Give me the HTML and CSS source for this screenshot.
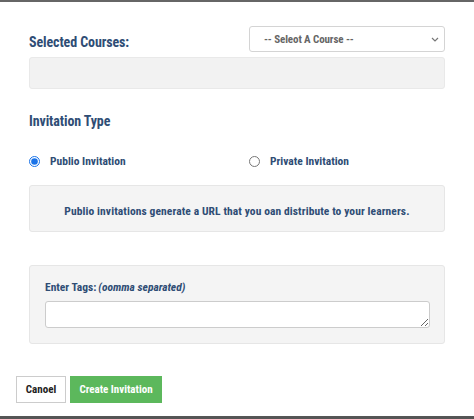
FILE: index.html
```html
<!DOCTYPE html>
<html lang="en">
<head>
    <meta charset="UTF-8">
    <meta name="viewport" content="width=device-width, initial-scale=1.0">
    <title>Create Invitation</title>
    <link rel="stylesheet" href="styles.css">
</head>
<body>
    <div class="page">
        <div class="invite-form">
            <div class="course-row">
                <label class="section-title" for="courseSelect">Selected Courses:</label>
                <div class="select-wrap">
                    <select id="courseSelect" class="course-select">
                        <option>-- Seleot A Course --</option>
                    </select>
                    <svg class="select-arrow" width="8" height="5" viewBox="0 0 8 5">
                        <path d="M1 1 L4 4 L7 1" fill="none" stroke="#777" stroke-width="1.2"/>
                    </svg>
                </div>
            </div>
            <div class="course-list"></div>

            <h2 class="section-title invite-title">Invitation Type</h2>

            <div class="radio-row">
                <label class="radio-option">
                    <input type="radio" name="inviteType" checked>
                    <span>Publio Invitation</span>
                </label>
                <label class="radio-option">
                    <input type="radio" name="inviteType">
                    <span>Private Invitation</span>
                </label>
            </div>

            <div class="info-box">Publio invitations generate a URL that you oan distribute to your learners.</div>

            <div class="tags-box">
                <label for="tags">Enter Tags:<em>(oomma separated)</em></label>
                <textarea id="tags"></textarea>
            </div>
        </div>

        <div class="actions">
            <button class="btn btn-cancel">Canoel</button>
            <button class="btn btn-create">Create Invitation</button>
        </div>
    </div>
</body>
</html>
```

FILE: styles.css
```css
* {
    box-sizing: border-box;
}

body {
    margin: 0;
    background: #fff;
    font-family: 'Roboto Condensed', 'Roboto', 'Liberation Sans', sans-serif;
    color: #2f4d75;
}

.page {
    height: 100vh;
    border-top: 2px solid #666;
    border-bottom: 3px solid #555;
    display: flex;
    flex-direction: column;
}

.invite-form {
    padding: 24px 29px 0 29px;
}

.section-title {
    font-size: 14px;
    letter-spacing: -0.1px;
    font-weight: bold;
    color: #2f4d75;
    margin: 0;
}

.course-row {
    display: flex;
    align-items: center;
    justify-content: space-between;
    height: 26px;
}

.course-row .section-title {
    padding-top: 5px;
}

.select-wrap {
    position: relative;
    width: 196px;
    height: 26px;
}

.course-select {
    appearance: none;
    width: 100%;
    height: 26px;
    border: 1px solid #d4d4d4;
    border-radius: 3px;
    background: #fff;
    color: #666;
    font-family: inherit;
    font-size: 11px;
    letter-spacing: -0.1px;
    font-weight: bold;
    padding: 0 10px 0 14px;
}

.select-arrow {
    position: absolute;
    right: 6px;
    top: 11px;
    pointer-events: none;
}

.course-list {
    margin-top: 5px;
    height: 32px;
    background: #f2f2f2;
    border: 1px solid #e9e9e9;
    border-radius: 3px;
}

.invite-title {
    margin-top: 24px;
}

.radio-row {
    display: flex;
    margin-top: 25px;
}

.radio-option {
    display: flex;
    align-items: center;
    font-size: 11.5px;
    font-weight: bold;
}

.radio-option:first-child {
    width: 220px;
    flex-shrink: 0;
}

.radio-option input {
    margin: 0 10px 0 0;
    width: 11px;
    height: 11px;
    accent-color: #1a73e8;
}

.info-box {
    margin-top: 17px;
    height: 47px;
    background: #f4f4f4;
    border: 1px solid #e6e6e6;
    border-radius: 3px;
    display: flex;
    align-items: center;
    justify-content: center;
    padding-top: 4px;
    font-size: 11.5px;
    letter-spacing: 0.1px;
    font-weight: bold;
    white-space: nowrap;
}

.tags-box {
    margin-top: 33px;
    height: 79px;
    background: #f4f4f4;
    border: 1px solid #e6e6e6;
    border-radius: 3px;
    padding: 14px 14px 0 15px;
}

.tags-box label {
    display: block;
    font-size: 11.5px;
    font-weight: bold;
}

.tags-box em {
    margin-left: 2px;
}

.tags-box textarea {
    display: block;
    width: 100%;
    height: 27px;
    margin-top: 7px;
    border: 1px solid #ccc;
    border-radius: 3px;
    background: #fff;
}

.actions {
    display: flex;
    gap: 4px;
    padding: 32px 0 0 16px;
}

.btn {
    height: 27px;
    font-family: inherit;
    font-size: 11px;
    font-weight: bold;
    border-radius: 0;
    white-space: nowrap;
    padding: 0;
    cursor: pointer;
}

.btn-cancel {
    width: 50px;
    background: #fff;
    border: 1px solid #ccc;
    color: #222;
}

.btn-create {
    width: 92px;
    background: #5cb85c;
    border: 1px solid #5cb85c;
    color: #fff;
}
```
